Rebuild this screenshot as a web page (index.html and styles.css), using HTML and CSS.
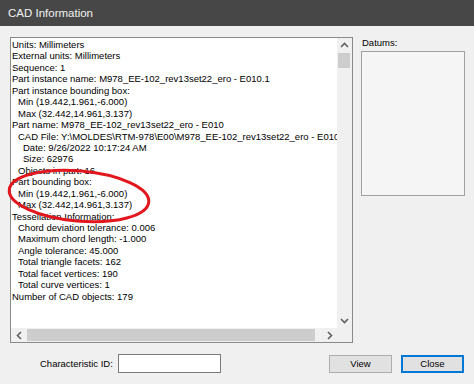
FILE: index.html
```html
<!DOCTYPE html>
<html>
<head>
<meta charset="utf-8">
<link rel="stylesheet" href="styles.css">
</head>
<body>
<div class="window">
  <div class="titlebar">CAD Information</div>
  <div class="main">
    <div class="listbox">
      <div class="text">
        <div class="ln">Units: Millimeters</div>
        <div class="ln">External units: Millimeters</div>
        <div class="ln">Sequence: 1</div>
        <div class="ln">Part instance name: M978_EE-102_rev13set22_ero - E010.1</div>
        <div class="ln">Part instance bounding box:</div>
        <div class="ln i1">Min (19.442,1.961,-6.000)</div>
        <div class="ln i1">Max (32.442,14.961,3.137)</div>
        <div class="ln">Part name: M978_EE-102_rev13set22_ero - E010</div>
        <div class="ln i1">CAD File: Y:\MOLDES\RTM-978\E00\M978_EE-102_rev13set22_ero - E010.igs</div>
        <div class="ln i2">Date: 9/26/2022 10:17:24 AM</div>
        <div class="ln i2">Size: 62976</div>
        <div class="ln i1">Objects in part: 16</div>
        <div class="ln">Part bounding box:</div>
        <div class="ln i1">Min (19.442,1.961,-6.000)</div>
        <div class="ln i1">Max (32.442,14.961,3.137)</div>
        <div class="ln">Tessellation Information:</div>
        <div class="ln i1">Chord deviation tolerance: 0.006</div>
        <div class="ln i1">Maximum chord length: -1.000</div>
        <div class="ln i1">Angle tolerance: 45.000</div>
        <div class="ln i1">Total triangle facets: 162</div>
        <div class="ln i1">Total facet vertices: 190</div>
        <div class="ln i1">Total curve vertices: 1</div>
        <div class="ln">Number of CAD objects: 179</div>
      </div>
      <div class="vscroll">
        <div class="arrow">
          <svg width="9" height="6" viewBox="0 0 9 6"><path d="M1 5 L4.5 1.5 L8 5" fill="none" stroke="#606060" stroke-width="1.6"/></svg>
        </div>
        <div class="vthumb"></div>
        <div class="vtrack"></div>
        <div class="arrow">
          <svg width="9" height="6" viewBox="0 0 9 6"><path d="M1 1 L4.5 4.5 L8 1" fill="none" stroke="#606060" stroke-width="1.6"/></svg>
        </div>
      </div>
      <div class="hscroll">
        <div class="harrow">
          <svg width="6" height="9" viewBox="0 0 6 9"><path d="M5 1 L1.5 4.5 L5 8" fill="none" stroke="#606060" stroke-width="1.6"/></svg>
        </div>
        <div class="hthumb"></div>
        <div class="htrack"></div>
        <div class="harrow">
          <svg width="6" height="9" viewBox="0 0 6 9"><path d="M1 1 L4.5 4.5 L1 8" fill="none" stroke="#606060" stroke-width="1.6"/></svg>
        </div>
      </div>
      <div class="corner"></div>
    </div>
    <div class="datums">
      <div class="dlabel">Datums:</div>
      <div class="dbox"></div>
    </div>
  </div>
  <div class="footer">
    <span class="flabel">Characteristic ID:</span>
    <div class="input"></div>
    <div class="spacer"></div>
    <div class="btn">View</div>
    <div class="btn default">Close</div>
  </div>
  <svg class="circle" width="474" height="384" viewBox="0 0 474 384">
    <ellipse cx="79" cy="196" rx="70" ry="25" transform="rotate(5 79 196)" fill="none" stroke="#e2171d" stroke-width="3"/>
  </svg>
</div>
</body>
</html>
```
FILE: styles.css
```css
* { box-sizing: border-box; }
html, body { margin: 0; padding: 0; }
body {
  width: 474px;
  height: 384px;
  overflow: hidden;
  font-family: "Liberation Sans", Arial, sans-serif;
  background: #f0f0f0;
}
.window {
  position: relative;
  width: 474px;
  height: 384px;
  background: #f0f0f0;
  display: flex;
  flex-direction: column;
}
.titlebar {
  height: 26px;
  background: #474747;
  color: #f2f2f2;
  font-size: 11.5px;
  line-height: 26px;
  padding-left: 8px;
}
.main {
  display: flex;
  gap: 8px;
  padding: 11px 0 0 10px;
}
.listbox {
  width: 343px;
  height: 306px;
  border: 1px solid #8a8a8a;
  background: #fff;
  display: grid;
  grid-template-columns: 1fr 15px;
  grid-template-rows: 1fr 14px;
  overflow: hidden;
}
.text {
  overflow: hidden;
  white-space: nowrap;
  font-size: 9.5px;
  line-height: 11.43px;
  color: #000;
  padding: 1px 0 0 1px;
}
.i1 { padding-left: 6px; }
.i2 { padding-left: 11px; }
.vscroll {
  background: #f0f0f0;
  display: flex;
  flex-direction: column;
}
.arrow {
  height: 14px;
  display: flex;
  align-items: center;
  justify-content: center;
}
.vthumb {
  height: 15px;
  margin: 1px 2px 0 1px;
  background: #cdcdcd;
}
.vtrack { flex: 1; }
.hscroll {
  background: #f0f0f0;
  display: flex;
  align-items: stretch;
}
.harrow {
  width: 15px;
  display: flex;
  align-items: center;
  justify-content: center;
}
.hthumb {
  width: 288px;
  margin: 1px 0 1px 1px;
  background: #cdcdcd;
}
.htrack { flex: 1; }
.corner { background: #f0f0f0; }
.datums {
  width: 104px;
  display: flex;
  flex-direction: column;
}
.dlabel {
  font-size: 9.5px;
  line-height: 12px;
  padding-left: 1px;
  height: 14px;
}
.dbox {
  height: 145px;
  border: 1px solid #a0a0a0;
  background: #f5f5f5;
}
.footer {
  display: flex;
  align-items: center;
  padding: 0 10px 0 40px;
  margin-top: 11px;
  height: 19px;
}
.flabel {
  font-size: 9.5px;
  color: #000;
  width: 78px;
}
.input {
  width: 103px;
  height: 19px;
  border: 1px solid #7a7a7a;
  background: #fff;
}
.spacer { flex: 1; }
.btn {
  width: 63px;
  height: 18px;
  border: 1px solid #adadad;
  background: #e1e1e1;
  font-size: 9.5px;
  display: flex;
  align-items: center;
  justify-content: center;
  color: #000;
  margin-left: 9px;
}
.btn.default {
  border-color: #0078d7;
  box-shadow: inset 0 0 0 1px #0078d7;
}
.circle {
  position: absolute;
  left: 0;
  top: 0;
  pointer-events: none;
}
```
